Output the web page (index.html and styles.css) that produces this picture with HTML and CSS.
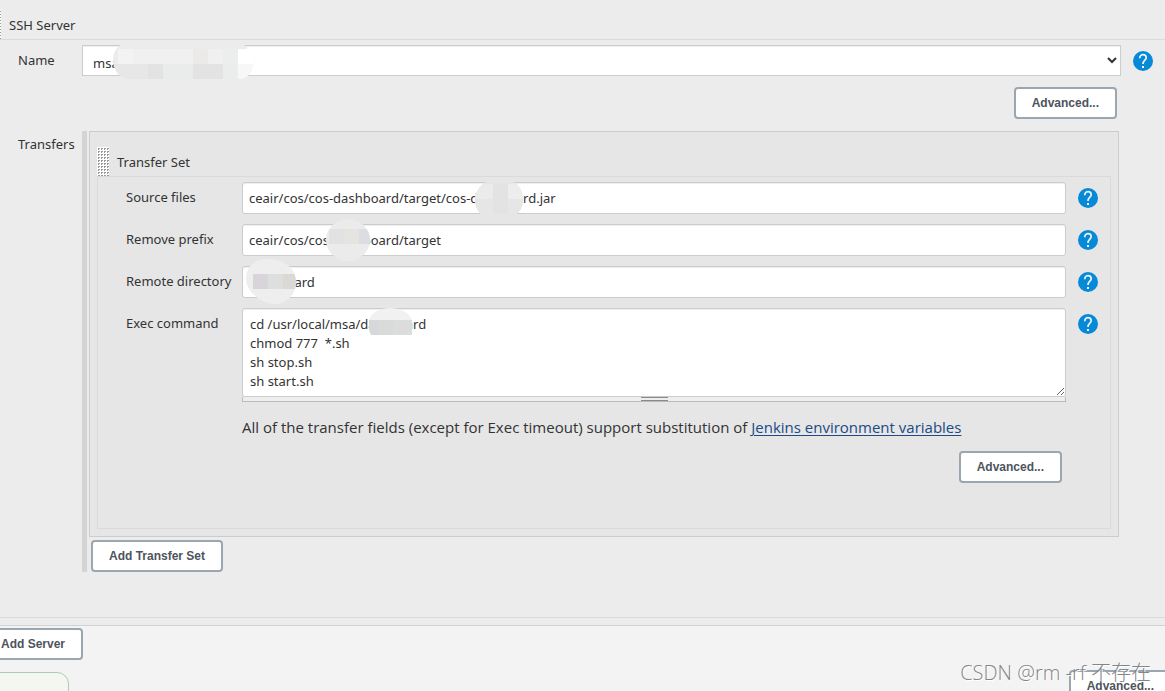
FILE: index.html
```html
<!DOCTYPE html>
<html lang="en">
<head>
<meta charset="utf-8">
<title>SSH Server configuration</title>
<link rel="stylesheet" href="styles.css">
</head>
<body>
<svg class="defs" aria-hidden="true">
  <symbol id="help" viewBox="0 0 20 20">
    <circle cx="10" cy="10" r="10" fill="#068ad8"/>
    <path d="M6.8 7.2V6.8A3.2 3.1 0 0 1 13.2 6.8C13.2 9.2 10 9.4 10 13" fill="none" stroke="#eef4f8" stroke-width="1.7"/>
    <rect x="9" y="15" width="2" height="2" fill="#fff"/>
  </symbol>
</svg>
<main>
  <section class="server">
    <header class="server-head"><span class="grip"></span><h2>SSH Server</h2></header>
    <div class="row">
      <label class="label" for="name">Name</label>
      <div class="field">
        <select id="name" class="select"><option>msa</option></select>
        <svg class="smudge smudge-name" viewBox="0 0 142 40" aria-hidden="true">
          <clipPath id="c1"><path d="M22 0H125L134 6V8H142C142 20 140 36 128 38H16C7 38 0 29 0 18C0 8 8 0 22 0Z"/></clipPath>
          <g clip-path="url(#c1)">
            <path fill="#ececec" d="M0 0H142V40H0Z"/>
            <path fill="#f3f3f3" d="M5 8H20V23H5Z"/><path fill="#f0f0f0" d="M20 8H80V23H20Z"/>
            <path fill="#ebeae8" d="M80 8H95V23H80Z"/><path fill="#f0f0f0" d="M95 8H110V23H95Z"/>
            <path fill="#eceded" d="M110 8H125V23H110Z"/><path fill="#fff" d="M125 8H142V23H125Z"/>
            <path fill="#e7e7e7" d="M0 23H35V38H0Z"/><path fill="#e3e3e3" d="M35 23H50V38H35Z"/>
            <path fill="#eaecec" d="M50 23H80V38H50Z"/><path fill="#e3e3e3" d="M80 23H110V38H80Z"/>
            <path fill="#ebecec" d="M110 23H125V38H110Z"/><path fill="#f7f7f7" d="M125 23H142V38H125Z"/>
          </g>
        </svg>
      </div>
      <button class="help" aria-label="Help for Name"><svg><use href="#help"/></svg></button>
    </div>
    <div class="actions"><button class="btn">Advanced...</button></div>

    <div class="row transfers">
      <span class="label">Transfers</span>
      <div class="list">
        <div class="panel">
          <header class="set-head"><span class="grip"></span><h3>Transfer Set</h3></header>
          <div class="set">
            <div class="row">
              <label class="label" for="source">Source files</label>
              <div class="field">
                <input id="source" class="input" value="ceair/cos/cos-dashboard/target/cos-dashboard.jar">
                <svg class="smudge smudge-source" viewBox="0 0 48 42" aria-hidden="true">
                  <clipPath id="c2"><path d="M24 0C40 0 48 8 48 21C48 33 39 40 25 42C10 42 0 33 0 22C0 10 9 0 24 0Z"/></clipPath>
                  <g clip-path="url(#c2)"><path fill="#e6e6e6" d="M0 0H48V42H0Z"/><path fill="#ebebeb" d="M0 5H18V20H0Z"/><path fill="#e3e3e3" d="M18 5H33V35H18Z"/><path fill="#ededed" d="M33 5H48V20H33Z"/></g>
                </svg>
              </div>
              <button class="help" aria-label="Help for Source files"><svg><use href="#help"/></svg></button>
            </div>
            <div class="row">
              <label class="label" for="prefix">Remove prefix</label>
              <div class="field">
                <input id="prefix" class="input" value="ceair/cos/cos-dashboard/target">
                <svg class="smudge smudge-prefix" viewBox="0 0 44 42" aria-hidden="true">
                  <clipPath id="c3"><ellipse cx="22" cy="21" rx="22" ry="21"/></clipPath>
                  <g clip-path="url(#c3)"><path fill="#ebebeb" d="M0 0H44V42H0Z"/><path fill="#e2e2e2" d="M3 10H18V25H3Z"/><path fill="#e5e4e0" d="M18 10H33V25H18Z"/><path fill="#dadee2" d="M33 10H44V25H33Z"/></g>
                </svg>
              </div>
              <button class="help" aria-label="Help for Remove prefix"><svg><use href="#help"/></svg></button>
            </div>
            <div class="row">
              <label class="label" for="remote">Remote directory</label>
              <div class="field">
                <input id="remote" class="input" value="dashboard">
                <svg class="smudge smudge-remote" viewBox="0 0 50 46" aria-hidden="true">
                  <clipPath id="c4"><path d="M20 0C34 -1 50 7 50 23C50 36 40 45 29 45C16 45 0 33 0 20C0 8 9 0 20 0Z"/></clipPath>
                  <g clip-path="url(#c4)"><path fill="#eee" d="M0 0H50V46H0Z"/><path fill="#d7d5d9" d="M7 15H22V30H7Z"/><path fill="#dddfdf" d="M22 15H37V30H22Z"/><path fill="#dad9d6" d="M37 15H50V30H37Z"/></g>
                </svg>
              </div>
              <button class="help" aria-label="Help for Remote directory"><svg><use href="#help"/></svg></button>
            </div>
            <div class="row">
              <label class="label" for="exec">Exec command</label>
              <div class="field">
                <textarea id="exec" class="input area">cd /usr/local/msa/dashboard
chmod 777  *.sh
sh stop.sh
sh start.sh</textarea>
                <div class="resizer"><span></span></div>
                <svg class="smudge smudge-exec" viewBox="0 0 44 27" aria-hidden="true">
                  <path fill="#f1f1f1" d="M0 12C5 -4 37 -4 43 12V14H0Z"/><path fill="#d5d9d9" d="M0 12H10V27H2L0 22Z"/><path fill="#d9dbdb" d="M10 12H24V27H10Z"/><path fill="#dcdcdc" d="M24 12H43V27H24Z"/>
                </svg>
                <p class="note">All of the transfer fields (except for Exec timeout) support substitution of <a href="#">Jenkins environment variables</a></p>
              </div>
              <button class="help" aria-label="Help for Exec command"><svg><use href="#help"/></svg></button>
            </div>
            <div class="actions"><button class="btn">Advanced...</button></div>
          </div>
        </div>
        <button class="btn add-set">Add Transfer Set</button>
      </div>
    </div>
  </section>
  <div class="divider"></div>
  <button class="btn add-server">Add Server</button>
  <div class="bottom"><div class="notice"></div><button class="btn">Advanced...</button></div>
</main>
<div class="watermark">CSDN @rm -rf 不存在</div>
</body>
</html>
```
FILE: styles.css
```css
* { box-sizing: border-box; }
body {
  position: relative;
  height: 100vh;
  margin: 0;
  overflow: hidden;
  background: #f3f3f3;
  color: #333;
  font: 13px/20px "Noto Sans", "Open Sans", sans-serif;
}
h2, h3, p { margin: 0; font-size: 13px; font-weight: 400; }
.defs { position: absolute; width: 0; height: 0; }

.server { padding-bottom: 45px; background: #ececec; border-bottom: 1px solid #dadada; }
.divider { height: 8px; background: #ececec; border-bottom: 1px solid #d2d2d2; }
.server-head {
  display: flex;
  gap: 8px;
  padding-top: 10px;
  border-bottom: 1px solid #dadada;
}
.server-head h2 { padding-top: 5px; }
.server-head .grip { width: 1px; background-position: 1px 1px; }
.grip {
  width: 12px;
  height: 29px;
  background: #fff conic-gradient(#999 25%, #fff 0) 0 1px / 3px 3px;
}

.row { display: flex; align-items: flex-start; }
.label { flex: none; padding-top: 5px; }
.field { position: relative; flex: 1; min-width: 0; }
.server > .row { padding: 5px 12px 0 18px; }
.server > .row > .label { width: 64px; }
.help {
  flex: none;
  width: 20px;
  height: 20px;
  margin: 6px 0 0 12px;
  padding: 0;
  border: 0;
  background: none;
}
.help svg { display: block; width: 20px; height: 20px; }

.select, .input {
  display: block;
  width: 100%;
  height: 32px;
  border: 1px solid #ccc;
  background: #fff;
  color: #333;
  font: inherit;
  box-shadow: inset 0 1px 1px #eee;
}
.select { height: 31px; padding: 4px 0 0 6px; }
.input { padding: 0 6px; border-radius: 3px; }
.area { height: 89px; padding: 6px 7px; line-height: 19px; overflow: hidden; }
.resizer {
  display: flex;
  justify-content: center;
  height: 5px;
  border: 1px solid #bbb;
  border-top: 0;
  background: #eee;
}
.resizer span { width: 27px; height: 4px; border: 1px solid #8a8a82; border-width: 1px 0; }

.btn {
  height: 32px;
  padding: 0 16px;
  border: 2px solid #9aa6b0;
  border-radius: 4px;
  background: #fff;
  color: #4d545d;
  font: bold 12px/16px "Liberation Sans", Arial, sans-serif;
  white-space: nowrap;
}
.actions { display: flex; justify-content: flex-end; }
.server > .actions { padding: 11px 48px 12px 0; }

.server > .transfers { padding: 0 46px 0 18px; }
.transfers > .label { padding-top: 3px; }
.list { flex: 1; min-width: 0; padding-left: 2px; border-left: 5px solid #d4d4d4; }
.panel { padding: 15px 7px 7px; border: 1px solid #ccc; background: #e6e6e6; }
.set-head { display: flex; gap: 8px; }
.set-head h3 { padding-top: 5px; }
.set {
  display: flex;
  flex-direction: column;
  gap: 10px;
  padding: 5px 12px 45px 28px;
  border: 1px solid #dadada;
}
.set .label { width: 116px; }
.set .actions { margin-top: 4px; padding-right: 36px; }
.note { margin-top: 15px; font: 15px/20px "Open Sans", "Noto Sans", sans-serif; }
.note a { color: #204a87; text-underline-offset: 2px; text-decoration-thickness: 1px; }
.add-set { display: block; margin: 3px 0 0 2px; }

.add-server { display: block; margin: 2px 0 0 -17px; }
.bottom { display: flex; justify-content: space-between; margin: 10px -7px 0 -12px; }
.notice { width: 81px; height: 48px; margin-top: 2px; border: 1px solid #a9cdb9; border-radius: 12px; background: #f3f7ef; }

.smudge { position: absolute; pointer-events: none; }
.smudge-name { left: 31px; top: -4px; width: 142px; height: 40px; }
.smudge-source { left: 233px; top: -3px; width: 48px; height: 42px; }
.smudge-prefix { left: 84px; top: -5px; width: 44px; height: 42px; }
.smudge-remote { left: 4px; top: -7px; width: 50px; height: 46px; }
.smudge-exec { left: 127px; top: 0; width: 44px; height: 27px; }

.watermark {
  position: absolute;
  right: 14px;
  bottom: 5px;
  color: #858585;
  font: 300 20px/26px "Open Sans", "Noto Sans CJK SC", sans-serif;
  text-shadow: 1px 1px 0 #fff;
}
```
